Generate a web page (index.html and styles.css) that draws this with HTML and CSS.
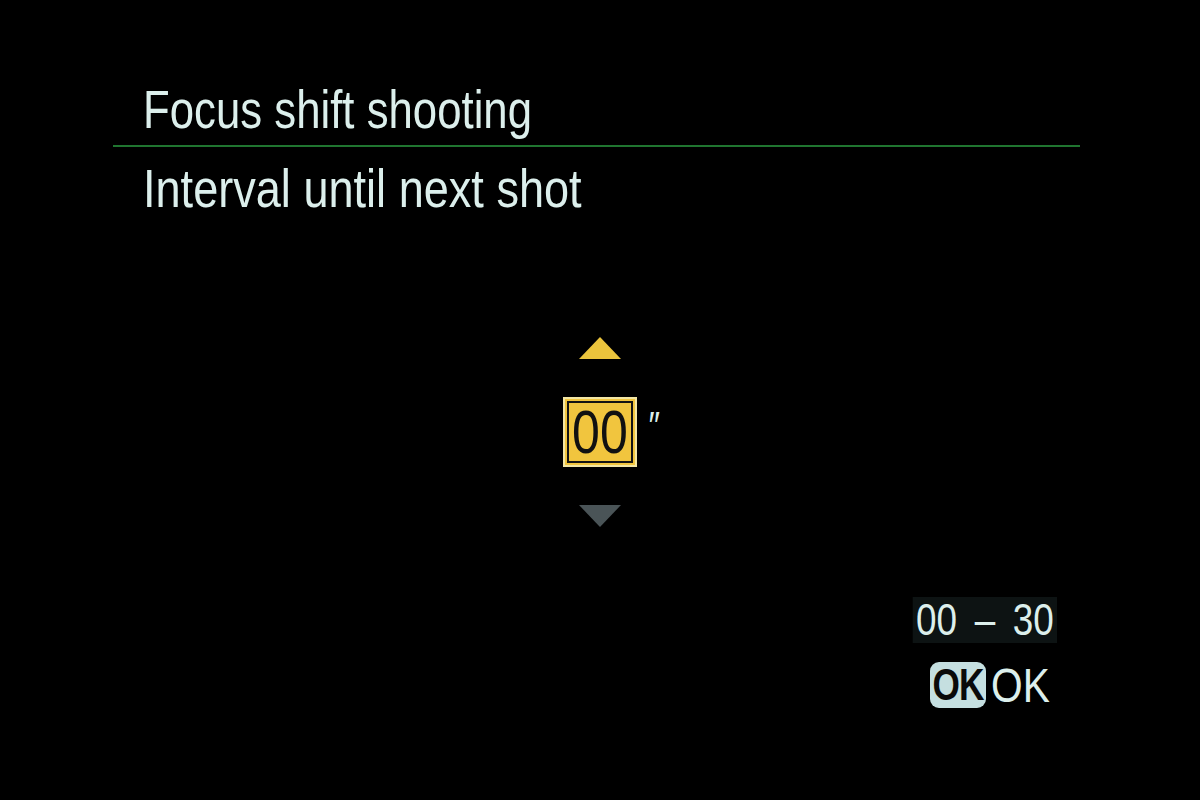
FILE: index.html
```html
<!DOCTYPE html>
<html lang="en">
<head>
  <meta charset="UTF-8" />
  <title>Focus shift shooting</title>
  <meta name="viewport" content="width=device-width, initial-scale=1.0" />
  <link rel="stylesheet" href="styles.css">
</head>
<body>
  <div class="screen">
    <div class="menu-head">
      <h1 class="menu-title"><span class="narrow">Focus shift shooting</span></h1>
      <div class="menu-rule"></div>
      <h2 class="menu-sub"><span class="narrow">Interval until next shot</span></h2>
    </div>

    <div class="stepper">
      <div class="arrow arrow-up"></div>
      <div class="value-box">
        <span class="value">00</span>
        <span class="unit">&Prime;</span>
      </div>
      <div class="arrow arrow-down"></div>
    </div>

    <div class="footer">
      <div class="range">00 &ndash; 30</div>
      <div class="ok-row">
        <span class="ok-badge"><span class="ok-text">OK</span></span>
        <span class="ok-label">OK</span>
      </div>
    </div>
  </div>
</body>
</html>
```

FILE: styles.css
```css
* { box-sizing: border-box; }
body {
  margin: 0;
  background: #000;
  color: #dcefec;
  font-family: "Liberation Sans", Arial, sans-serif;
}
.screen {
  width: 1200px;
  height: 800px;
  display: flex;
  flex-direction: column;
}
/* the camera font is condensed, squeeze the regular face */
.narrow {
  display: inline-block;
  transform: scaleX(0.81);
  transform-origin: left center;
  white-space: nowrap;
}

/* header: title, green rule, setting name */
.menu-head { padding: 82px 120px 0 113px; }
.menu-title, .menu-sub {
  margin: 0;
  padding-left: 30px;
  font-size: 54px;
  line-height: 54px;
  font-weight: normal;
}
.menu-rule {
  height: 2px;
  margin-top: 9px;
  background: #207530;
}
.menu-sub { margin-top: 14px; }
.menu-sub .narrow { transform: scaleX(0.835); }

/* value selector in the middle */
.stepper {
  display: flex;
  flex-direction: column;
  align-items: center;
  margin-top: 122px;
  gap: 38px;
}
.arrow {
  width: 0;
  height: 0;
  border-left: 21.5px solid transparent;
  border-right: 21.5px solid transparent;
}
.arrow-up { border-bottom: 22px solid #ebc43c; }
.arrow-down { border-top: 22px solid #4a5457; }
.value-box {
  position: relative;
  width: 74px;
  height: 70px;
  border: 2px solid #f3e6a4;
  background: #f1c53e;
  box-shadow: inset 0 0 0 2px #f1c53e, inset 0 0 0 4px #141414;
  display: flex;
  align-items: center;
  justify-content: center;
}
.value {
  display: inline-block;
  color: #111;
  font-size: 61px;
  line-height: 1;
  transform: scaleX(0.82);
}
.unit {
  position: absolute;
  left: 100%;
  top: 6px;
  margin-left: 11px;
  font-size: 38px;
  font-style: italic;
  color: #dcefec;
  transform: scaleX(0.85);
}

/* range hint and confirm button */
.footer {
  margin-top: 70px;
  padding-right: 143px;
  display: flex;
  flex-direction: column;
  align-items: flex-end;
  gap: 19px;
}
.range {
  height: 46px;
  padding: 0 4px;
  background: #0d1313;
  font-size: 45px;
  line-height: 46px;
  word-spacing: 9px;
  white-space: nowrap;
  transform: scaleX(0.82);
  transform-origin: right center;
}
.ok-row {
  display: flex;
  align-items: center;
  gap: 5px;
  margin-right: 7px;
}
.ok-badge {
  width: 56px;
  height: 46px;
  border-radius: 9px;
  background: #c5dfe0;
  color: #0a0a0a;
  display: flex;
  align-items: center;
  justify-content: center;
}
.ok-text {
  display: inline-block;
  font-weight: bold;
  font-size: 44px;
  line-height: 46px;
  letter-spacing: -1px;
  transform: scaleX(0.8);
}
.ok-label {
  display: inline-block;
  font-size: 49px;
  line-height: 46px;
  margin-right: -12px;
  transform: scaleX(0.83);
  transform-origin: left center;
}
```
